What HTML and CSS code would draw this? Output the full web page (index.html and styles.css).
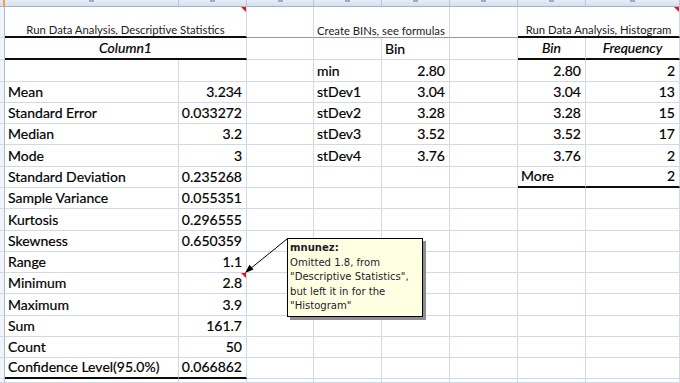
FILE: index.html
```html
<!DOCTYPE html>
<html>
<head>
<meta charset="utf-8">
<link rel="stylesheet" href="styles.css">
</head>
<body>
<div class="page">
  <div class="sheet">
    <!-- header row -->
    <div class="corner"></div>
    <div class="hd"><i class="tick"></i></div>
    <div class="hd"><i class="tick"></i></div>
    <div class="hd"><i class="tick"></i></div>
    <div class="hd"><i class="tick"></i></div>
    <div class="hd"><i class="tick"></i></div>
    <div class="hd"><i class="tick"></i></div>
    <div class="hd"><i class="tick"></i></div>
    <div class="hd"><i class="tick"></i></div>

    <!-- row 1 -->
    <div class="rh"></div>
    <div class="c span2 ctr small thick note">Run Data Analysis, Descriptive Statistics</div>
    <div class="c grey"></div>
    <div class="c span2 small grey">Create BINs, see formulas</div>
    <div class="c grey"></div>
    <div class="c span2 ctr small thick note">Run Data Analysis, Histogram</div>

    <!-- row 2 -->
    <div class="rh"></div>
    <div class="c span2 ctr it thick">Column1</div>
    <div class="c"></div>
    <div class="c"></div>
    <div class="c">Bin</div>
    <div class="c"></div>
    <div class="c ctr it thick">Bin</div>
    <div class="c ctr it thick">Frequency</div>

    <!-- row 3 -->
    <div class="rh"></div>
    <div class="c"></div>
    <div class="c"></div>
    <div class="c"></div>
    <div class="c">min</div>
    <div class="c r">2.80</div>
    <div class="c"></div>
    <div class="c r">2.80</div>
    <div class="c r">2</div>

    <!-- Mean -->
    <div class="rh"></div>
    <div class="c">Mean</div>
    <div class="c r">3.234</div>
    <div class="c"></div>
    <div class="c">stDev1</div>
    <div class="c r">3.04</div>
    <div class="c"></div>
    <div class="c r">3.04</div>
    <div class="c r">13</div>

    <!-- Standard Error -->
    <div class="rh"></div>
    <div class="c">Standard Error</div>
    <div class="c r">0.033272</div>
    <div class="c"></div>
    <div class="c">stDev2</div>
    <div class="c r">3.28</div>
    <div class="c"></div>
    <div class="c r">3.28</div>
    <div class="c r">15</div>

    <!-- Median -->
    <div class="rh"></div>
    <div class="c">Median</div>
    <div class="c r">3.2</div>
    <div class="c"></div>
    <div class="c">stDev3</div>
    <div class="c r">3.52</div>
    <div class="c"></div>
    <div class="c r">3.52</div>
    <div class="c r">17</div>

    <!-- Mode -->
    <div class="rh"></div>
    <div class="c">Mode</div>
    <div class="c r">3</div>
    <div class="c"></div>
    <div class="c">stDev4</div>
    <div class="c r">3.76</div>
    <div class="c"></div>
    <div class="c r">3.76</div>
    <div class="c r">2</div>

    <!-- Standard Deviation -->
    <div class="rh"></div>
    <div class="c">Standard Deviation</div>
    <div class="c r">0.235268</div>
    <div class="c"></div>
    <div class="c"></div>
    <div class="c"></div>
    <div class="c"></div>
    <div class="c thick">More</div>
    <div class="c r thick">2</div>

    <!-- Sample Variance -->
    <div class="rh"></div>
    <div class="c">Sample Variance</div>
    <div class="c r">0.055351</div>
    <div class="c"></div><div class="c"></div><div class="c"></div><div class="c"></div><div class="c"></div><div class="c"></div>

    <!-- Kurtosis -->
    <div class="rh"></div>
    <div class="c">Kurtosis</div>
    <div class="c r">0.296555</div>
    <div class="c"></div><div class="c"></div><div class="c"></div><div class="c"></div><div class="c"></div><div class="c"></div>

    <!-- Skewness -->
    <div class="rh"></div>
    <div class="c">Skewness</div>
    <div class="c r">0.650359</div>
    <div class="c"></div><div class="c"></div><div class="c"></div><div class="c"></div><div class="c"></div><div class="c"></div>

    <!-- Range -->
    <div class="rh"></div>
    <div class="c">Range</div>
    <div class="c r">1.1</div>
    <div class="c"></div><div class="c"></div><div class="c"></div><div class="c"></div><div class="c"></div><div class="c"></div>

    <!-- Minimum -->
    <div class="rh"></div>
    <div class="c">Minimum</div>
    <div class="c r note">2.8</div>
    <div class="c"></div><div class="c"></div><div class="c"></div><div class="c"></div><div class="c"></div><div class="c"></div>

    <!-- Maximum -->
    <div class="rh"></div>
    <div class="c">Maximum</div>
    <div class="c r">3.9</div>
    <div class="c"></div><div class="c"></div><div class="c"></div><div class="c"></div><div class="c"></div><div class="c"></div>

    <!-- Sum -->
    <div class="rh"></div>
    <div class="c">Sum</div>
    <div class="c r">161.7</div>
    <div class="c"></div><div class="c"></div><div class="c"></div><div class="c"></div><div class="c"></div><div class="c"></div>

    <!-- Count -->
    <div class="rh"></div>
    <div class="c">Count</div>
    <div class="c r">50</div>
    <div class="c"></div><div class="c"></div><div class="c"></div><div class="c"></div><div class="c"></div><div class="c"></div>

    <!-- Confidence Level -->
    <div class="rh"></div>
    <div class="c thick">Confidence Level(95.0%)</div>
    <div class="c r thick">0.066862</div>
    <div class="c"></div><div class="c"></div><div class="c"></div><div class="c"></div><div class="c"></div><div class="c"></div>

    <!-- partial row -->
    <div class="rh"></div>
    <div class="c"></div><div class="c"></div><div class="c"></div><div class="c"></div><div class="c"></div><div class="c"></div><div class="c"></div><div class="c"></div>
  </div>

  <svg class="arrow" width="680" height="383" viewBox="0 0 680 383">
    <line x1="287" y1="239" x2="250" y2="269" stroke="#000" stroke-width="1"/>
    <polygon points="245,273 253.5,269.5 249.5,264.8" fill="#000"/>
  </svg>

  <div class="comment">
    <div class="author">mnunez:</div>
    <div>Omitted 1.8, from</div>
    <div>"Descriptive Statistics",</div>
    <div>but left it in for the</div>
    <div>"Histogram"</div>
  </div>
</div>
</body>
</html>
```

FILE: styles.css
```css
html, body {
  margin: 0;
  padding: 0;
  background: #fff;
}

.page {
  position: relative;
  width: 680px;
  height: 383px;
  overflow: hidden;
}

.sheet {
  display: grid;
  grid-template-columns: 5px 174px 68px 67px 68px 68px 68px 68px 94px;
  grid-template-rows: 7px 31px 22px 22px 21px 21px 21px 22px 21px 21px 22px 21px 21px 21px 22px 21px 21px 21px 1fr;
  width: 680px;
  height: 383px;
  font-family: Lato, "Open Sans", sans-serif;
  font-size: 14px;
  color: #000;
}

.c {
  box-sizing: border-box;
  display: flex;
  align-items: flex-end;
  padding: 0 3px 2px 3px;
  border-right: 1px solid #d3d9e4;
  border-bottom: 1px solid #d3d9e4;
  white-space: nowrap;
  min-width: 0;
  position: relative;
  line-height: 17px;
  -webkit-text-stroke: 0.2px #000;
}

.r { justify-content: flex-end; padding-right: 4px; }
.ctr { justify-content: center; }
.it { font-style: italic; }
.span2 { grid-column: span 2; }
.thick { border-bottom: 2px solid #0d0d0d; }
.grey { border-bottom-color: #9a9a9a; }

.small {
  font-size: 11.3px;
  line-height: 13px;
  padding-bottom: 0;
  color: #222;
  -webkit-text-stroke: 0;
}

.note::after {
  content: "";
  position: absolute;
  top: 0;
  right: 0;
  width: 0;
  height: 0;
  border-top: 5px solid #e8141a;
  border-left: 5px solid transparent;
}

.corner {
  box-sizing: border-box;
  background: linear-gradient(#e4ebf5, #d5dfed);
  border-right: 2px solid #f0a040;
  border-bottom: 1px solid #9eb6ce;
}

.hd {
  box-sizing: border-box;
  display: flex;
  justify-content: center;
  align-items: flex-start;
  background: linear-gradient(#e6edf7, #d6e0ee);
  border-right: 1px solid #b4c6dc;
  border-bottom: 1px solid #9eb6ce;
}

.tick {
  display: block;
  width: 5px;
  height: 2px;
  background: #6b7686;
  opacity: 0.55;
}

.rh {
  box-sizing: border-box;
  background: #f1f4f9;
  border-right: 1px solid #a9bcd4;
  border-bottom: 1px solid #d3dce8;
}

.arrow {
  position: absolute;
  left: 0;
  top: 0;
  pointer-events: none;
}

.comment {
  position: absolute;
  left: 287px;
  top: 238px;
  width: 136px;
  height: 79px;
  box-sizing: border-box;
  padding: 2px 2px 0 2px;
  background: #ffffe1;
  border: 1px solid #000;
  box-shadow: 3px 3px 0 #8e8e8e;
  font-family: "DejaVu Sans Condensed", "DejaVu Sans", sans-serif;
  font-stretch: condensed;
  font-size: 11.2px;
  line-height: 14.5px;
  color: #1c1c30;
}

.author {
  font-weight: bold;
}
```
